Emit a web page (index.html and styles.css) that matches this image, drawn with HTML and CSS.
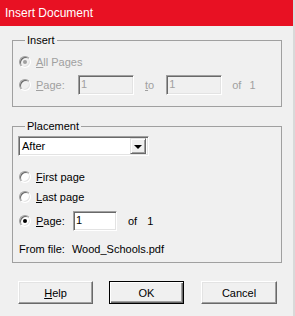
FILE: index.html
```html
<!DOCTYPE html>
<html lang="en">

<head>
    <meta charset="UTF-8">
    <title>Insert Document</title>
    <link rel="stylesheet" href="styles.css">
</head>

<body>
    <div class="window">
        <div class="titlebar">Insert Document</div>
        <div class="client">
            <fieldset class="group group-insert">
                <legend>Insert</legend>
                <div class="row row-all">
                    <span class="radio disabled checked"></span>
                    <span class="label dim"><u>A</u>ll Pages</span>
                </div>
                <div class="row row-range">
                    <span class="radio disabled"></span>
                    <span class="label dim range-label"><u>P</u>age:</span>
                    <span class="field disabled range-field">1</span>
                    <span class="dim range-to"><u>t</u>o</span>
                    <span class="field disabled range-field range-field-end">1</span>
                    <span class="dim range-of">of</span>
                    <span class="dim range-count">1</span>
                </div>
            </fieldset>

            <fieldset class="group group-placement">
                <legend>Placement</legend>
                <div class="select">
                    <span class="select-value">After</span>
                    <span class="select-button"><span class="arrow"></span></span>
                </div>
                <div class="row row-first">
                    <span class="radio"></span>
                    <span class="label"><u>F</u>irst page</span>
                </div>
                <div class="row">
                    <span class="radio"></span>
                    <span class="label"><u>L</u>ast page</span>
                </div>
                <div class="row row-page">
                    <span class="radio checked"></span>
                    <span class="label page-label"><u>P</u>age:</span>
                    <span class="field page-field">1</span>
                    <span class="page-of">of</span>
                    <span class="page-count">1</span>
                </div>
                <div class="from-file">
                    <span>From file:</span>
                    <span class="file-name">Wood_Schools.pdf</span>
                </div>
            </fieldset>

            <div class="buttons">
                <button class="btn"><u>H</u>elp</button>
                <button class="btn btn-default">OK</button>
                <button class="btn btn-cancel">Cancel</button>
            </div>
        </div>
    </div>
</body>

</html>
```

FILE: styles.css
```css
* {
    box-sizing: border-box;
}

body {
    margin: 0;
    width: 295px;
    height: 316px;
    overflow: hidden;
    background: #f0f0f0;
    font-family: 'Liberation Sans', Arial, sans-serif;
    font-size: 11px;
    color: #000;
}

.window {
    height: 316px;
    border-right: 2px solid #d9d9d9;
}

.titlebar {
    height: 26px;
    line-height: 26px;
    padding-left: 5px;
    background: #e81123;
    color: #fff;
    font-size: 12px;
}

.client {
    padding: 0 11px 0 12px;
}

u {
    text-decoration: underline;
    text-underline-offset: 1px;
}

/* group boxes */

.group {
    margin: 0;
    min-width: 0;
    border: 1px solid #a0a0a0;
    padding: 0 6px;
}

.group legend {
    margin-left: 6px;
    padding: 0 2px;
    line-height: 13px;
    font-size: 11px;
}

.group-insert {
    margin-top: 8px;
    padding-top: 5px;
    padding-bottom: 11px;
}

.group-placement {
    margin-top: 13px;
    padding-top: 3px;
    padding-bottom: 6px;
}

.row {
    display: flex;
    align-items: center;
    height: 20px;
}

.row-all {
    margin-bottom: 3px;
}

.dim {
    color: #a0a0a0;
}

/* radio buttons */

.radio {
    position: relative;
    flex: none;
    width: 12px;
    height: 12px;
    border-radius: 50%;
    border: 1px solid;
    border-color: #a0a0a0 #fff #fff #a0a0a0;
    background: #fff;
    box-shadow: inset 1px 1px 0 #696969, inset -1px -1px 0 #e3e3e3;
    margin-right: 5px;
}

.radio.disabled {
    background: #f0f0f0;
}

.radio.checked::after {
    content: '';
    position: absolute;
    left: 3px;
    top: 3px;
    width: 4px;
    height: 4px;
    border-radius: 50%;
    background: #000;
}

.radio.disabled.checked::after {
    background: #a0a0a0;
}

/* edit fields */

.field {
    flex: none;
    height: 20px;
    padding: 2px 0 0 2px;
    line-height: 13px;
    border: 1px solid;
    border-color: #a0a0a0 #fff #fff #a0a0a0;
    box-shadow: inset 1px 1px 0 #696969, inset -1px -1px 0 #e3e3e3;
    background: #fff;
}

.field.disabled {
    background: #f0f0f0;
    color: #a0a0a0;
}

.range-label {
    width: 42px;
}

.range-field {
    width: 56px;
}

.range-to {
    margin-left: 11px;
}

.range-field-end {
    margin-left: 12px;
}

.range-of {
    margin-left: 10px;
}

.range-count {
    margin-left: 8px;
}

/* dropdown */

.select {
    display: flex;
    align-items: center;
    width: 131px;
    height: 20px;
    margin-left: -1px;
    padding: 2px;
    border: 1px solid;
    border-color: #a0a0a0 #fff #fff #a0a0a0;
    box-shadow: inset 1px 1px 0 #696969, inset -1px -1px 0 #e3e3e3;
    background: #fff;
}

.select-value {
    flex: 1;
    padding-left: 1px;
}

.select-button {
    display: flex;
    justify-content: center;
    align-items: center;
    width: 16px;
    height: 16px;
    border: 1px solid;
    border-color: #e3e3e3 #696969 #696969 #e3e3e3;
    box-shadow: inset 1px 1px 0 #fff, inset -1px -1px 0 #a0a0a0;
    background: #f0f0f0;
}

.arrow {
    width: 0;
    height: 0;
    border-left: 4px solid transparent;
    border-right: 4px solid transparent;
    border-top: 4px solid #000;
    margin-top: 1px;
}

.row-first {
    margin-top: 11px;
}

.row-page {
    margin-top: 4px;
}

.page-label {
    width: 37px;
}

.page-field {
    width: 44px;
}

.page-of {
    margin-left: 11px;
}

.page-count {
    margin-left: 10px;
}

.from-file {
    margin-top: 12px;
    line-height: 13px;
}

.file-name {
    margin-left: 4px;
}

/* push buttons */

.buttons {
    display: flex;
    margin-top: 18px;
    padding-left: 6px;
}

.btn {
    width: 75px;
    height: 23px;
    padding: 0;
    font-family: inherit;
    font-size: 11px;
    color: #000;
    background: #f0f0f0;
    border: 1px solid;
    border-color: #fff #696969 #696969 #fff;
    box-shadow: inset -1px -1px 0 #a0a0a0, inset 1px 1px 0 #e3e3e3;
    border-radius: 0;
}

.btn-default {
    margin-left: 16px;
    border: 1px solid #000;
    box-shadow: inset 1px 1px 0 #fff, inset -1px -1px 0 #696969, inset -2px -2px 0 #a0a0a0;
}

.btn-cancel {
    width: 76px;
    margin-left: 17px;
}
```
